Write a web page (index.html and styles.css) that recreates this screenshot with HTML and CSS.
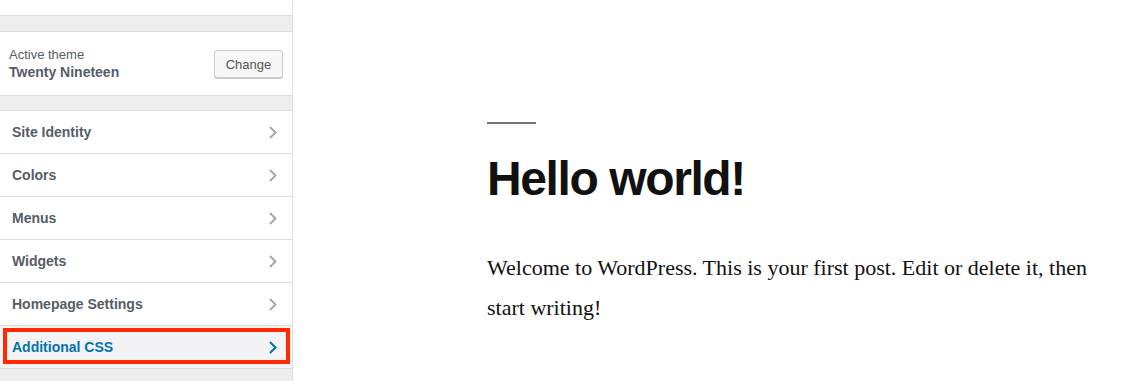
FILE: index.html
```html
<!DOCTYPE html>
<html lang="en">
<head>
<meta charset="utf-8">
<title>Customizer</title>
<link rel="stylesheet" href="styles.css">
</head>
<body>
<div class="app">
  <aside class="sidebar">
    <div class="top-block"></div>
    <section class="theme">
      <div class="theme-info">
        <div class="theme-label">Active theme</div>
        <div class="theme-name">Twenty Nineteen</div>
      </div>
      <button class="change-btn" type="button">Change</button>
    </section>
    <ul class="panels">
      <li class="panel"><span>Site Identity</span><svg class="chev" viewBox="0 0 8 13" width="8" height="13"><path d="M1 1l5.5 5.5L1 12" fill="none" stroke="currentColor" stroke-width="1.8"/></svg></li>
      <li class="panel"><span>Colors</span><svg class="chev" viewBox="0 0 8 13" width="8" height="13"><path d="M1 1l5.5 5.5L1 12" fill="none" stroke="currentColor" stroke-width="1.8"/></svg></li>
      <li class="panel"><span>Menus</span><svg class="chev" viewBox="0 0 8 13" width="8" height="13"><path d="M1 1l5.5 5.5L1 12" fill="none" stroke="currentColor" stroke-width="1.8"/></svg></li>
      <li class="panel"><span>Widgets</span><svg class="chev" viewBox="0 0 8 13" width="8" height="13"><path d="M1 1l5.5 5.5L1 12" fill="none" stroke="currentColor" stroke-width="1.8"/></svg></li>
      <li class="panel"><span>Homepage Settings</span><svg class="chev" viewBox="0 0 8 13" width="8" height="13"><path d="M1 1l5.5 5.5L1 12" fill="none" stroke="currentColor" stroke-width="1.8"/></svg></li>
      <li class="panel active"><span>Additional CSS</span><svg class="chev" viewBox="0 0 8 13" width="8" height="13"><path d="M1 1l5.5 5.5L1 12" fill="none" stroke="currentColor" stroke-width="2"/></svg><span class="highlight"></span></li>
    </ul>
  </aside>
  <main class="preview">
    <div class="rule"></div>
    <h1 class="title">Hello world!</h1>
    <p class="entry">Welcome to WordPress. This is your first post. Edit or delete it, then start writing!</p>
  </main>
</div>
</body>
</html>
```

FILE: styles.css
```css
* { box-sizing: border-box; }
html, body { margin: 0; padding: 0; height: 100%; }
body { background: #fff; overflow: hidden; }

.app {
  display: flex;
  height: 381px;
}

.sidebar {
  width: 293px;
  flex: 0 0 293px;
  background: #eee;
  border-right: 1px solid #ddd;
  font-family: "Liberation Sans", Arial, sans-serif;
  color: #555d66;
}

.top-block {
  height: 16px;
  background: #fff;
  border-bottom: 1px solid #ddd;
  margin-bottom: 15px;
}

.theme {
  height: 65px;
  background: #fff;
  border-top: 1px solid #ddd;
  border-bottom: 1px solid #ddd;
  display: flex;
  align-items: center;
  justify-content: space-between;
  padding: 0 9px 0 9px;
  margin-bottom: 14px;
}

.theme-info { padding-bottom: 0; }
.theme-label { font-size: 13px; line-height: 16px; }
.theme-name { font-size: 14px; line-height: 18px; font-weight: bold; }

.change-btn {
  width: 69px;
  height: 28px;
  border: 1px solid #ccc;
  border-radius: 3px;
  background: #f7f7f7;
  box-shadow: 0 1px 0 #ccc;
  font-family: "Liberation Sans", Arial, sans-serif;
  font-size: 13px;
  color: #555;
  padding: 0;
  margin-top: 1px;
}

.panels {
  list-style: none;
  margin: 0;
  padding: 0;
  border-bottom: 1px solid #ddd;
}

.panel {
  position: relative;
  height: 43px;
  background: #fff;
  border-top: 1px solid #ddd;
  display: flex;
  align-items: center;
  justify-content: space-between;
  padding: 0 15px 0 12px;
  font-size: 14px;
  font-weight: bold;
}

.panel .chev { color: #a0a5aa; display: block; }

.panel.active {
  background: #f3f3f5;
  color: #0073aa;
}
.panel.active .chev { color: #0073aa; }

.highlight {
  position: absolute;
  top: 2px;
  left: 3px;
  right: 2px;
  bottom: 4px;
  border: 4px solid #ff2a00;
  pointer-events: none;
}

.preview {
  flex: 1;
  padding-left: 194px;
  color: #111;
}

.rule {
  margin-top: 122px;
  width: 49px;
  height: 2px;
  background: #767676;
}

.title {
  margin: 26px 0 0 0;
  font-family: "Liberation Sans", Arial, sans-serif;
  font-weight: bold;
  font-size: 48px;
  line-height: 57.6px;
  letter-spacing: -1.4px;
  color: #111;
}

.entry {
  margin: 40.5px 0 0 0;
  width: 620px;
  font-family: "Liberation Serif", "Times New Roman", serif;
  font-size: 22px;
  line-height: 39.6px;
  color: #111;
}
```
